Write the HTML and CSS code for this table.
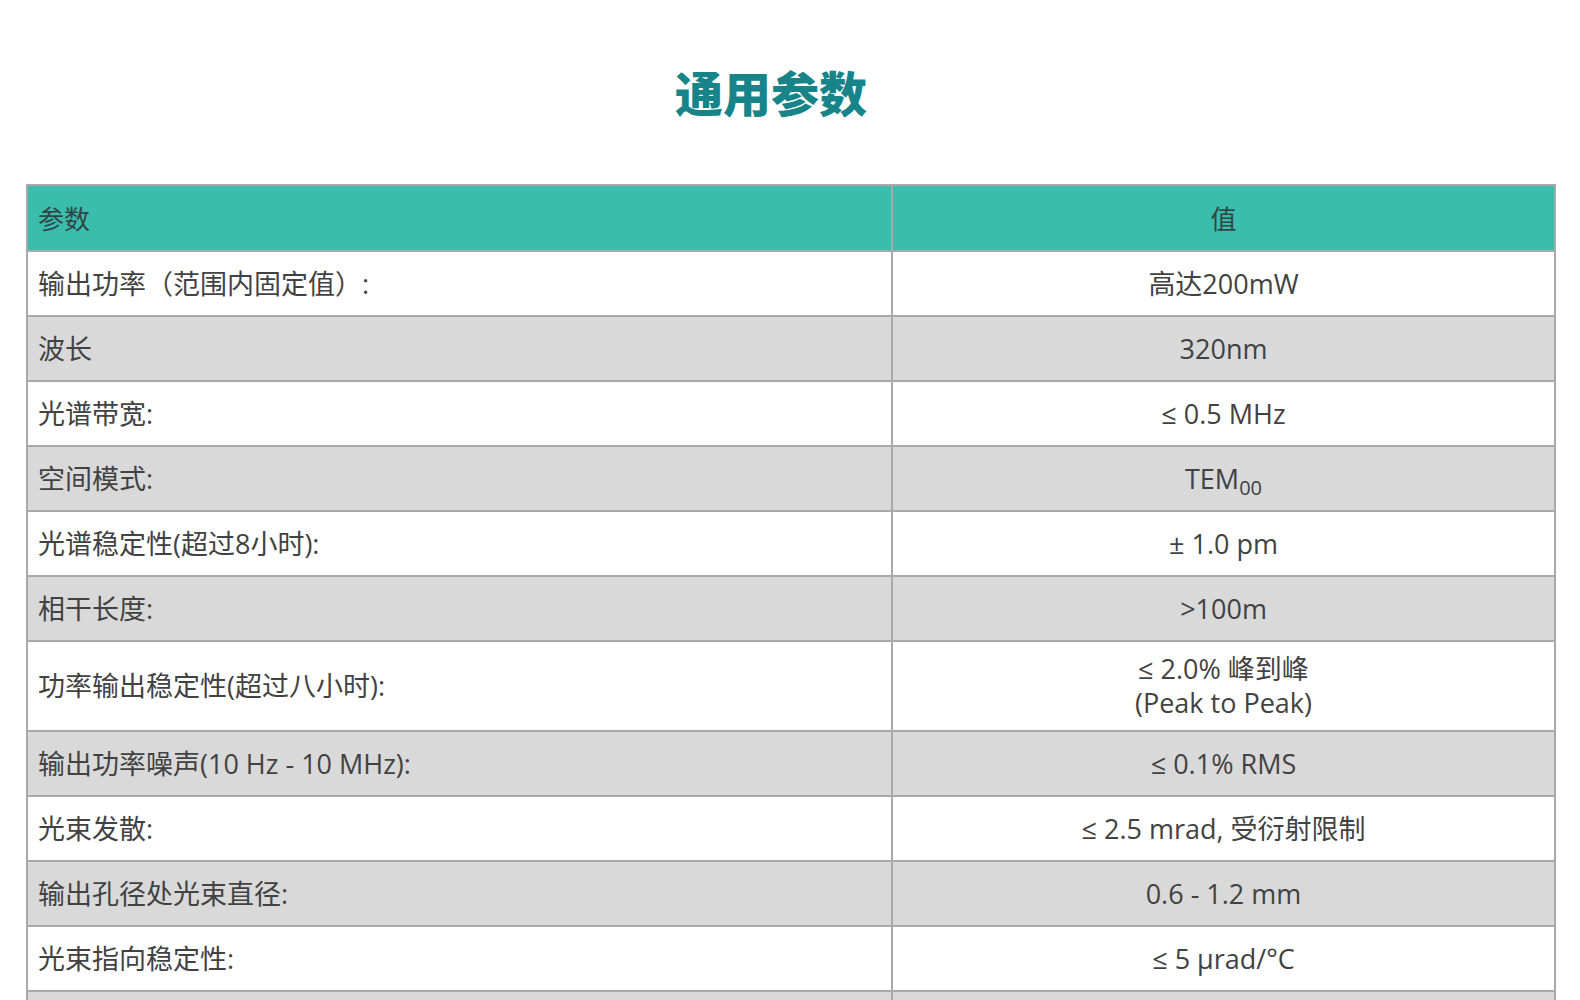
FILE: index.html
```html
<!DOCTYPE html>
<html lang="zh-CN">
<head>
<meta charset="utf-8">
<title>通用参数</title>
<link rel="stylesheet" href="styles.css">
</head>
<body>
<main class="page">
  <h1 class="title">通用参数</h1>
  <table class="spec">
    <colgroup>
      <col class="col-param">
      <col class="col-value">
    </colgroup>
    <thead>
      <tr>
        <th class="th-param">参数</th>
        <th class="th-value">值</th>
      </tr>
    </thead>
    <tbody>
      <tr><td>输出功率（范围内固定值）:</td><td>高达200mW</td></tr>
      <tr><td>波长</td><td>320nm</td></tr>
      <tr><td>光谱带宽:</td><td>≤ 0.5 MHz</td></tr>
      <tr><td>空间模式:</td><td>TEM<sub>00</sub></td></tr>
      <tr><td>光谱稳定性(超过8小时):</td><td>± 1.0 pm</td></tr>
      <tr><td>相干长度:</td><td>&gt;100m</td></tr>
      <tr class="tall"><td>功率输出稳定性(超过八小时):</td><td>≤ 2.0% 峰到峰<br>(Peak to Peak)</td></tr>
      <tr><td>输出功率噪声(10 Hz - 10 MHz):</td><td>≤ 0.1% RMS</td></tr>
      <tr><td>光束发散:</td><td>≤ 2.5 mrad, 受衍射限制</td></tr>
      <tr><td>输出孔径处光束直径:</td><td>0.6 - 1.2 mm</td></tr>
      <tr><td>光束指向稳定性:</td><td>≤ 5 µrad/°C</td></tr>
      <tr class="stub"><td></td><td></td></tr>
    </tbody>
  </table>
</main>
</body>
</html>
```
FILE: styles.css
```css
html, body {
  margin: 0;
  padding: 0;
  background: #ffffff;
}

.page {
  padding: 0 26px 0 26px;
  font-family: "Open Sans", "Noto Sans CJK SC", sans-serif;
  color: #424242;
}

.title {
  margin: 0;
  padding: 67px 38px 0 0;
  height: 48px;
  line-height: 48px;
  font-size: 48px;
  font-weight: 900;
  font-family: "Noto Sans CJK SC", sans-serif;
  color: #17848a;
  text-align: center;
  margin-bottom: 69px;
}

.spec {
  width: 1528px;
  border-collapse: collapse;
  table-layout: fixed;
  font-size: 27px;
  border: 2px solid #a9a9a9;
}

.col-param { width: 865px; }
.col-value { width: 663px; }

.spec th,
.spec td {
  border: 2px solid #a9a9a9;
  height: 65px;
  padding: 0 10px;
  line-height: 34px;
  font-weight: normal;
  box-sizing: border-box;
  vertical-align: middle;
}

.spec td:first-child,
.spec th:first-child {
  text-align: left;
}

.spec td:last-child,
.spec th:last-child {
  text-align: center;
}

.spec thead th {
  background: #3bbdad;
  color: #2f4744;
  height: 66px;
  font-family: "Noto Sans CJK SC", sans-serif;
  font-size: 26px;
}

.spec tbody tr:nth-child(even) td {
  background: #d9d9d9;
}

.spec tbody tr.tall td {
  height: 90px;
}

.spec sub {
  font-size: 20px;
  line-height: 0;
  vertical-align: -6px;
}
```
